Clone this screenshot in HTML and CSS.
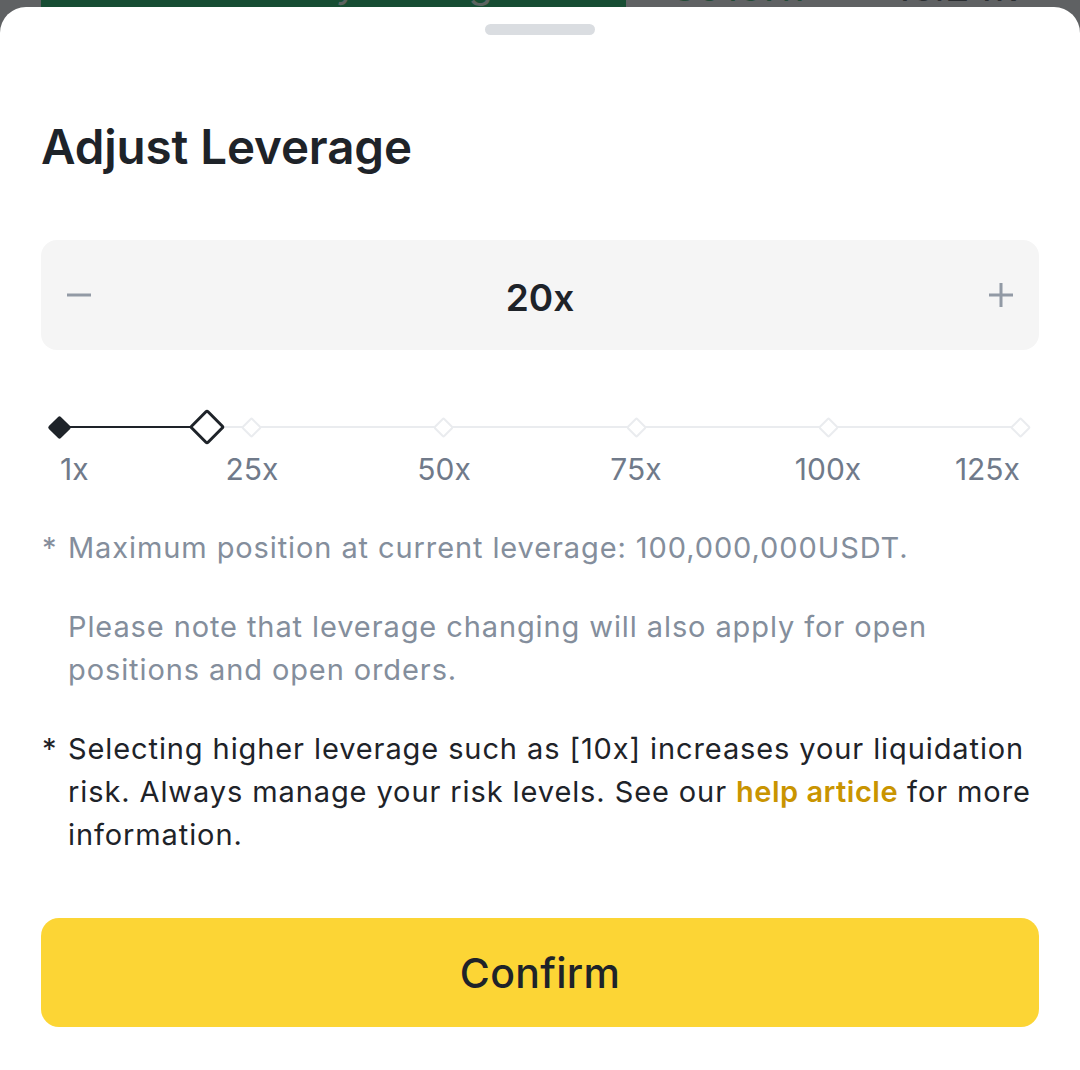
FILE: index.html
```html
<!DOCTYPE html>
<html lang="en">

<head>
    <meta charset="UTF-8">
    <meta name="viewport" content="width=device-width, initial-scale=1.0">
    <title>Adjust Leverage</title>
    <link rel="stylesheet" href="styles.css">
</head>

<body>
    <div class="backdrop">
        <div class="backdrop-bar"><span>Qty Change</span></div>
        <div class="backdrop-price"><span>80137.1</span></div>
        <div class="backdrop-vol"><span>16.24k</span></div>
    </div>

    <div class="sheet">
        <div class="sheet-handle"></div>

        <h1 class="sheet-title">Adjust Leverage</h1>

        <div class="stepper">
            <button type="button" class="stepper-btn" aria-label="decrease">
                <svg width="26" height="26" viewBox="0 0 26 26"><path d="M1 13h24" stroke="#929aa5" stroke-width="3"/></svg>
            </button>
            <div class="stepper-value">20x</div>
            <button type="button" class="stepper-btn" aria-label="increase">
                <svg width="26" height="26" viewBox="0 0 26 26"><path d="M1 13h24M13 1v24" stroke="#929aa5" stroke-width="3"/></svg>
            </button>
        </div>

        <div class="slider">
            <div class="slider-track">
                <span class="tick tick-start"></span>
                <span class="tick"></span>
                <span class="tick"></span>
                <span class="tick"></span>
                <span class="tick"></span>
                <span class="tick"></span>
            </div>
            <div class="slider-fill" style="width: 15.3%"></div>
            <span class="slider-thumb" style="left: 15.3%"></span>
        </div>

        <div class="slider-labels">
            <span class="slider-label first"><i>1x</i></span>
            <span class="slider-label"><i>25x</i></span>
            <span class="slider-label"><i>50x</i></span>
            <span class="slider-label"><i>75x</i></span>
            <span class="slider-label"><i>100x</i></span>
            <span class="slider-label last"><i>125x</i></span>
        </div>

        <div class="notes">
            <div class="note muted">
                <span class="note-mark">*</span>
                <p>Maximum position at current leverage: 100,000,000USDT.</p>
            </div>
            <div class="note muted">
                <span class="note-mark"></span>
                <p>Please note that leverage changing will also apply for open positions and open orders.</p>
            </div>
            <div class="note">
                <span class="note-mark">*</span>
                <p>Selecting higher leverage such as [10x] increases your liquidation risk. Always manage your risk levels. See our <a href="#" class="help-link">help article</a> for more information.</p>
            </div>
        </div>

        <button type="button" class="confirm-button">Confirm</button>
    </div>
</body>

</html>
```

FILE: styles.css
```css
body {
    font-family: Inter, "Noto Sans", sans-serif;
    background-color: #5f6163;
    margin: 0;
    width: 1080px;
    height: 1070px;
    overflow: hidden;
    display: flex;
    flex-direction: column;
}

/* page behind the sheet, dimmed */
.backdrop {
    height: 7px;
    overflow: hidden;
    display: flex;
}

.backdrop-bar,
.backdrop-price,
.backdrop-vol {
    height: 7px;
    overflow: hidden;
    font-size: 40px;
    line-height: 40px;
}

.backdrop-bar span,
.backdrop-price span,
.backdrop-vol span {
    display: block;
    margin-top: -33px;
    white-space: nowrap;
}

.backdrop-bar span {
    margin-top: -37px;
}

.backdrop-bar {
    margin-left: 41px;
    width: 585px;
    background-color: #174d33;
    color: #5b6360;
    text-indent: 250px;
}

.backdrop-price {
    margin-left: 46px;
    width: 222px;
    color: #244a37;
}

.backdrop-vol {
    color: #2b2e31;
}

.sheet {
    flex: 1;
    background-color: #ffffff;
    border-radius: 26px 26px 0 0;
    padding: 0 41px;
    display: flex;
    flex-direction: column;
    color: #1e2329;
}

.sheet-handle {
    align-self: center;
    width: 110px;
    height: 11px;
    margin-top: 17px;
    border-radius: 6px;
    background-color: #dadde1;
}

.sheet-title {
    font-size: 47.5px;
    line-height: 56px;
    font-weight: 600;
    margin: 84px 0 0 0;
    letter-spacing: -0.1px;
}

.stepper {
    margin-top: 65px;
    height: 110px;
    border-radius: 16px;
    background-color: #f5f5f5;
    display: flex;
    align-items: center;
    padding: 0 25px 0 25px;
}

.stepper-btn {
    border: none;
    background: none;
    padding: 0;
    width: 26px;
    height: 26px;
    display: flex;
    cursor: pointer;
}

.stepper-value {
    flex: 1;
    text-align: center;
    font-size: 37px;
    font-weight: 600;
    padding-top: 4px;
}

.slider {
    position: relative;
    margin: 57px 19px 0;
    height: 40px;
}

.slider-track {
    height: 40px;
    display: flex;
    justify-content: space-between;
    align-items: center;
    background: linear-gradient(#eaecef, #eaecef) center / 100% 2px no-repeat;
}

.tick {
    width: 15px;
    height: 15px;
    margin: 0 -8px;
    box-sizing: border-box;
    border: 2.5px solid #eaecef;
    border-radius: 2px;
    background-color: #ffffff;
    transform: rotate(45deg);
}

.tick-start {
    width: 17px;
    height: 17px;
    margin: 0 -9px;
    border: none;
    background-color: #1e2329;
    position: relative;
    z-index: 2;
}

.slider-fill {
    position: absolute;
    left: 0;
    top: 19px;
    height: 2px;
    background-color: #1e2329;
}

.slider-thumb {
    position: absolute;
    top: 7px;
    width: 26px;
    height: 26px;
    margin-left: -13px;
    box-sizing: border-box;
    border: 3px solid #1e2329;
    border-radius: 3px;
    background-color: #ffffff;
    transform: rotate(45deg);
}

.slider-labels {
    margin: 4px 19px 0;
    display: flex;
    justify-content: space-between;
    font-size: 30px;
    line-height: 36px;
    color: #707a8a;
}

.slider-label {
    width: 0;
    display: flex;
    justify-content: center;
}

.slider-label i {
    font-style: normal;
    white-space: nowrap;
}

.slider-label.first {
    justify-content: flex-start;
}

.slider-label.last {
    justify-content: flex-end;
}

.notes {
    margin-top: 39px;
    display: flex;
    flex-direction: column;
    gap: 36px;
}

.note {
    display: flex;
    font-size: 29px;
    line-height: 43px;
    letter-spacing: 0.9px;
}

.note.muted {
    color: #848e9c;
}

.note-mark {
    width: 26px;
    flex: none;
    padding-left: 1px;
}

.note p {
    margin: 0;
}

.help-link {
    color: #c99400;
    font-weight: 600;
    letter-spacing: 0.5px;
    text-decoration: none;
}

.confirm-button {
    margin-top: 62px;
    height: 109px;
    border: none;
    border-radius: 18px;
    background-color: #fcd535;
    color: #1e2329;
    font-family: inherit;
    font-size: 41px;
    font-weight: 500;
    letter-spacing: 0.3px;
    cursor: pointer;
}
```
